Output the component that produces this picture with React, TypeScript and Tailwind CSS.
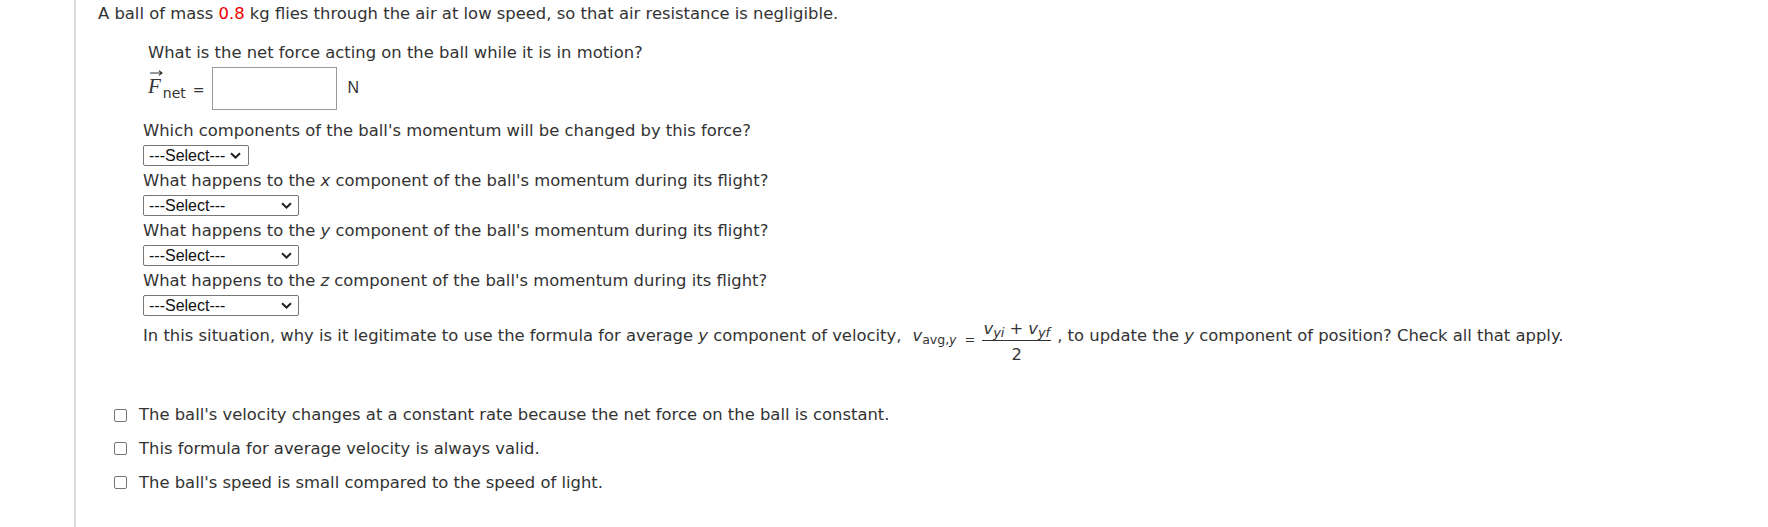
import React from "react";

// dropdown drawn as a box so it renders the same everywhere
function SelectBox({ wide }: { wide?: boolean }) {
  return (
    <div
      className={
        wide
          ? "mt-[1.5px] flex h-[21px] w-[156px] items-center justify-between rounded-[2px] border border-[#767676] bg-white pl-[5px] pr-[6px]"
          : "mt-[1.5px] flex h-[21px] w-[106px] items-center justify-between rounded-[2px] border border-[#767676] bg-white pl-[5px] pr-[7px]"
      }
    >
      <span className="font-['Liberation_Sans',Arial,sans-serif] text-[16px] leading-[19px] text-[#111]">
        ---Select---
      </span>
      <svg width="11" height="7" viewBox="0 0 11 7" fill="none">
        <path d="M1 1.2l4.5 4.3L10 1.2" stroke="#222" strokeWidth="2" />
      </svg>
    </div>
  );
}

const questions = [
  { text: <>Which components of the ball's momentum will be changed by this force?</>, wide: false },
  {
    text: (
      <>
        What happens to the <i>x</i> component of the ball's momentum during its flight?
      </>
    ),
    wide: true,
  },
  {
    text: (
      <>
        What happens to the <i>y</i> component of the ball's momentum during its flight?
      </>
    ),
    wide: true,
  },
  {
    text: (
      <>
        What happens to the <i>z</i> component of the ball's momentum during its flight?
      </>
    ),
    wide: true,
  },
];

const choices = [
  "The ball's velocity changes at a constant rate because the net force on the ball is constant.",
  "This formula for average velocity is always valid.",
  "The ball's speed is small compared to the speed of light.",
];

export default function App() {
  return (
    <div className="flex min-h-[527px] bg-white font-['DejaVu_Sans',Verdana,sans-serif] text-[16.4px] text-[#333]">
      <div className="w-[74px] shrink-0" />
      <div className="flex-1 border-l-2 border-[#dedede] pl-[22px]">
        {/* Problem statement */}
        <p className="pt-[2px] leading-[24px]">
          A ball of mass <span className="text-[#ee0000]">0.8</span> kg flies through the air at low speed, so
          that air resistance is negligible.
        </p>

        {/* Net force */}
        <div className="mt-[15px] pl-[50px]">
          <p className="leading-[24px]">What is the net force acting on the ball while it is in motion?</p>
          <div className="mt-[1.5px] flex h-[43px] items-center">
            <span className="relative mb-[3px] font-['Liberation_Serif',serif] text-[21px] italic leading-[21px]">
              F
              <svg
                className="absolute left-[2px] top-[-6px]"
                width="13"
                height="6"
                viewBox="0 0 13 6"
                fill="none"
              >
                <path d="M0 3h11.5M9 0.8L12 3 9 5.2" stroke="#333" strokeWidth="1.1" />
              </svg>
            </span>
            <span className="ml-[2px] mt-[10px] text-[14px] leading-[14px]">net</span>
            <span className="ml-[7px] mt-[3px] text-[14px] leading-[14px]">=</span>
            <div className="ml-[7px] h-[43px] w-[125px] border border-[#999] bg-white" />
            <span className="ml-[11px] font-['Liberation_Sans',Arial,sans-serif] text-[16px] leading-[16px]">N</span>
          </div>
        </div>

        {/* Momentum questions */}
        <div className="mt-[9.5px] flex flex-col gap-[3.5px] pl-[45px]">
          {questions.map((q, i) => (
            <div key={i}>
              <p className="leading-[24px]">{q.text}</p>
              <SelectBox wide={q.wide} />
            </div>
          ))}
        </div>

        {/* Average velocity formula */}
        <div className="mt-[8.5px] flex items-start pl-[45px]">
          <span className="leading-[24px]">
            In this situation, why is it legitimate to use the formula for average <i>y</i> component of velocity,
          </span>
          <span className="ml-[11px] leading-[24px]">
            <i>v</i>
            <sub className="text-[12.5px]">
              avg,<i>y</i>
            </sub>
          </span>
          <span className="ml-[8px] mt-[4px] text-[13px] leading-[24px]">=</span>
          <div className="ml-[7px] flex flex-col items-center">
            <div className="flex h-[17px] items-start border-b border-[#333] px-[1px] leading-[9px] whitespace-nowrap">
              <span>
                <i>v</i>
                <sub className="text-[13px]">
                  <i>yi</i>
                </sub>
              </span>
              <span className="mx-[5px]">+</span>
              <span>
                <i>v</i>
                <sub className="text-[13px]">
                  <i>yf</i>
                </sub>
              </span>
            </div>
            <div className="mt-[6px] h-[16px] leading-[16px]">2</div>
          </div>
          <span className="ml-[6px] leading-[24px]">
            , to update the <i>y</i> component of position? Check all that apply.
          </span>
        </div>

        {/* Checkbox choices */}
        <div className="mt-[40.3px] flex flex-col gap-[9.7px] pl-[16px]">
          {choices.map((c) => (
            <label key={c} className="flex h-[24px] items-center">
              <span className="h-[13px] w-[13px] shrink-0 rounded-[2px] border border-[#767676] bg-white" />
              <span className="ml-[12px] leading-[24px]">{c}</span>
            </label>
          ))}
        </div>
      </div>
    </div>
  );
}
